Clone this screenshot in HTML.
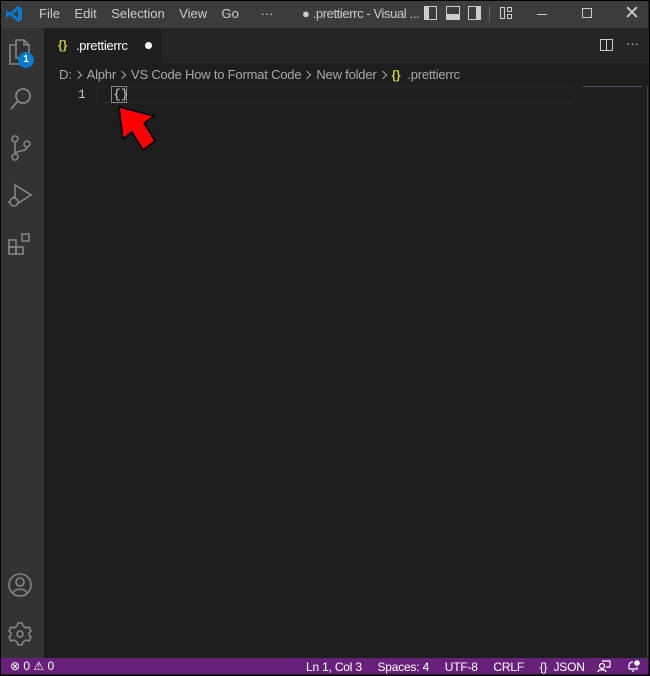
<!DOCTYPE html><html><head><style>
*{margin:0;padding:0;box-sizing:border-box}
body{width:650px;height:676px;background:#000;font-family:"Liberation Sans",sans-serif;font-size:13px;color:#ccc;position:relative;overflow:hidden}
.a{position:absolute}
.c{display:inline-block;width:6px;height:6px;border-top:1.2px solid #a9a9a9;border-right:1.2px solid #a9a9a9;transform:rotate(45deg);margin:0 6px 1px 3px}
</style></head><body>
<div class="a" style="left:1px;top:1px;width:648px;height:674px;background:#1e1e1e"></div>
<!-- title bar -->
<div class="a" style="left:1px;top:1px;width:647px;height:27px;background:#3c3c3c"></div>
<svg class="a" style="left:5px;top:5px" width="18" height="18" viewBox="0 0 18 18"><path d="M13 1L17 3V15L13 17L5 10L2 12.5L1 12V6L2 5.5L5 8L13 1ZM13 5L8 9L13 13Z" fill="#0a7acc"/></svg>
<div class="a" style="top:6px;left:39px;font-size:13px;color:#ccc;white-space:nowrap">File&nbsp;&nbsp;&nbsp; Edit&nbsp;&nbsp;&nbsp; Selection&nbsp;&nbsp;&nbsp; View&nbsp;&nbsp;&nbsp; Go&nbsp;&nbsp;&nbsp;&nbsp;&nbsp; ···</div>
<div class="a" style="top:6px;left:302px;font-size:13px;color:#ccc;white-space:nowrap;letter-spacing:-0.4px">● .prettierrc - Visual ...</div>
<div class="a" style="left:424px;top:6px;width:13px;height:14px;border:1.5px solid #ccc;border-left-width:5px;background:#3c3c3c"></div>
<div class="a" style="left:446px;top:6px;width:14px;height:14px;border:1.5px solid #ccc;border-bottom-width:6px"></div>
<div class="a" style="left:468px;top:6px;width:13px;height:14px;border:1.5px solid #ccc;border-right-width:5px"></div>
<div class="a" style="left:489px;top:6px;width:1px;height:16px;background:#666"></div>
<div class="a" style="left:500px;top:7px;width:5px;height:12px;border:1.3px solid #ccc"></div>
<div class="a" style="left:507px;top:7px;width:5px;height:5px;border:1.3px solid #ccc"></div>
<div class="a" style="left:507px;top:14px;width:5px;height:5px;border:1.3px solid #ccc"></div>
<div class="a" style="left:537px;top:14px;width:10px;height:1px;background:#ccc"></div>
<div class="a" style="left:582px;top:8px;width:10px;height:10px;border:1px solid #ccc"></div>
<div class="a" style="left:624px;top:2px;font-size:19px;color:#ccc">✕</div>
<!-- activity bar -->
<div class="a" style="left:1px;top:28px;width:43px;height:630px;background:#333"></div>
<svg class="a" style="left:7px;top:38px" width="26" height="28" viewBox="0 0 26 28" fill="none" stroke="#858585" stroke-width="1.6"><path d="M9 2H17L22 7V20H9Z"/><path d="M17 2V7H22"/><path d="M9 7H3V26H16V20"/></svg>
<div class="a" style="left:18px;top:52px;width:16px;height:16px;border-radius:50%;background:#007acc;color:#fff;font-size:10px;text-align:center;line-height:16px;font-weight:bold">1</div>
<svg class="a" style="left:8px;top:86px" width="26" height="26" viewBox="0 0 26 26" fill="none" stroke="#858585" stroke-width="1.8"><circle cx="15" cy="10" r="7"/><path d="M10 15L3 23"/></svg>
<svg class="a" style="left:8px;top:134px" width="26" height="28" viewBox="0 0 26 28" fill="none" stroke="#858585" stroke-width="1.6"><circle cx="7" cy="5" r="3"/><circle cx="7" cy="23" r="3"/><circle cx="19" cy="10" r="3"/><path d="M7 8V20M19 13C19 18 8 16 7 20"/></svg>
<svg class="a" style="left:6px;top:182px" width="28" height="28" viewBox="0 0 28 28" fill="none" stroke="#858585" stroke-width="1.6"><path d="M9 3L25 13L9 23Z"/><circle cx="8" cy="20" r="4" fill="#333"/><path d="M2 20H4M12 20H14M8 14V16"/></svg>
<svg class="a" style="left:7px;top:231px" width="26" height="26" viewBox="0 0 26 26" fill="none" stroke="#858585" stroke-width="1.6"><rect x="2" y="9" width="7" height="7"/><rect x="2" y="16" width="7" height="7"/><rect x="9" y="16" width="7" height="7"/><rect x="15" y="3" width="7" height="7"/></svg>
<svg class="a" style="left:7px;top:572px" width="26" height="26" viewBox="0 0 26 26" fill="none" stroke="#858585" stroke-width="1.6"><circle cx="13" cy="13" r="11"/><circle cx="13" cy="10" r="4"/><path d="M6 21C8 16 18 16 20 21"/></svg>
<svg class="a" style="left:7px;top:621px" width="26" height="26" viewBox="0 0 26 26" fill="none" stroke="#858585" stroke-width="1.6"><path d="M11 2H15L16 5L19 7L22 6L24 10L22 12V14L24 16L22 20L19 19L16 21L15 24H11L10 21L7 19L4 20L2 16L4 14V12L2 10L4 6L7 7L10 5Z"/><circle cx="13" cy="13" r="3"/></svg>
<!-- tab bar -->
<div class="a" style="left:44px;top:28px;width:605px;height:35px;background:#252526"></div>
<div class="a" style="left:44px;top:28px;width:118px;height:35px;background:#1e1e1e"></div>
<div class="a" style="left:58px;top:38px;font-size:12px;color:#cbcb41;font-weight:bold">{}</div>
<div class="a" style="left:76px;top:38px;color:#fff;font-size:13px;letter-spacing:-0.3px">.prettierrc</div>
<div class="a" style="left:145px;top:42px;width:7px;height:7px;border-radius:50%;background:#fff"></div>
<div class="a" style="left:600px;top:39px;width:13px;height:12px;border:1.3px solid #ccc"></div>
<div class="a" style="left:606px;top:39px;width:1.3px;height:12px;background:#ccc"></div>
<div class="a" style="left:626px;top:36px;color:#ccc">···</div>
<!-- breadcrumb -->
<div class="a" style="left:59px;top:67px;color:#a9a9a9;font-size:13px;white-space:nowrap;letter-spacing:-0.2px">D:<span class="c"></span>Alphr<span class="c"></span>VS Code How to Format Code<span class="c"></span>New folder<span class="c"></span><span style="color:#cbcb41;font-weight:bold;font-size:12px">{}</span>&nbsp; .prettierrc</div>
<!-- editor -->
<div class="a" style="left:96px;top:86px;width:478px;height:17px;border:1px solid #282828"></div>
<div class="a" style="left:78px;top:87px;color:#c6c6c6;font-family:'Liberation Mono',monospace;font-size:13px">1</div>
<div class="a" style="left:111px;top:86px;width:16px;height:17px;border:1px solid #888;color:#d4d4d4;font-family:'Liberation Mono',monospace;font-size:13px;line-height:15px;padding-left:1px">{}</div>
<div class="a" style="left:582px;top:86px;width:61px;height:1px;background:#3a5068"></div>
<div class="a" style="left:647px;top:86px;width:1px;height:572px;background:#444"></div>
<svg class="a" style="left:115px;top:105px" width="42" height="48" viewBox="0 0 42 48"><path d="M4 2L39 11L29 18L40 36L28 45L17 27L8 34Z" fill="#f00" stroke="#000" stroke-width="1.5"/></svg>
<!-- status bar -->
<div class="a" style="left:1px;top:658px;width:647px;height:16px;background:#68217a"></div>
<div class="a" style="left:10px;top:659px;color:#fff;font-size:12px;white-space:nowrap">⊗ 0 ⚠ 0</div>
<div class="a" style="left:306px;top:660px;color:#fff;font-size:12px;white-space:nowrap;letter-spacing:-0.2px">Ln 1, Col 3&nbsp;&nbsp;&nbsp;&nbsp; Spaces: 4&nbsp;&nbsp;&nbsp;&nbsp; UTF-8&nbsp;&nbsp;&nbsp;&nbsp; CRLF&nbsp;&nbsp;&nbsp;&nbsp; {}&nbsp; JSON</div>
<svg class="a" style="left:597px;top:660px" width="14" height="13" viewBox="0 0 14 13" fill="none" stroke="#fff" stroke-width="1.2"><path d="M5 1H13V7H9"/><circle cx="5" cy="6" r="2.5"/><path d="M1 12C1 9 9 9 9 12"/></svg>
<svg class="a" style="left:626px;top:660px" width="14" height="13" viewBox="0 0 14 13" fill="none" stroke="#fff" stroke-width="1.2"><path d="M3 9V6C3 3 5 2 7 2M3 9H11V7"/><path d="M6 11H8"/><circle cx="11" cy="3" r="2.2" fill="#fff"/></svg>
</body></html>
